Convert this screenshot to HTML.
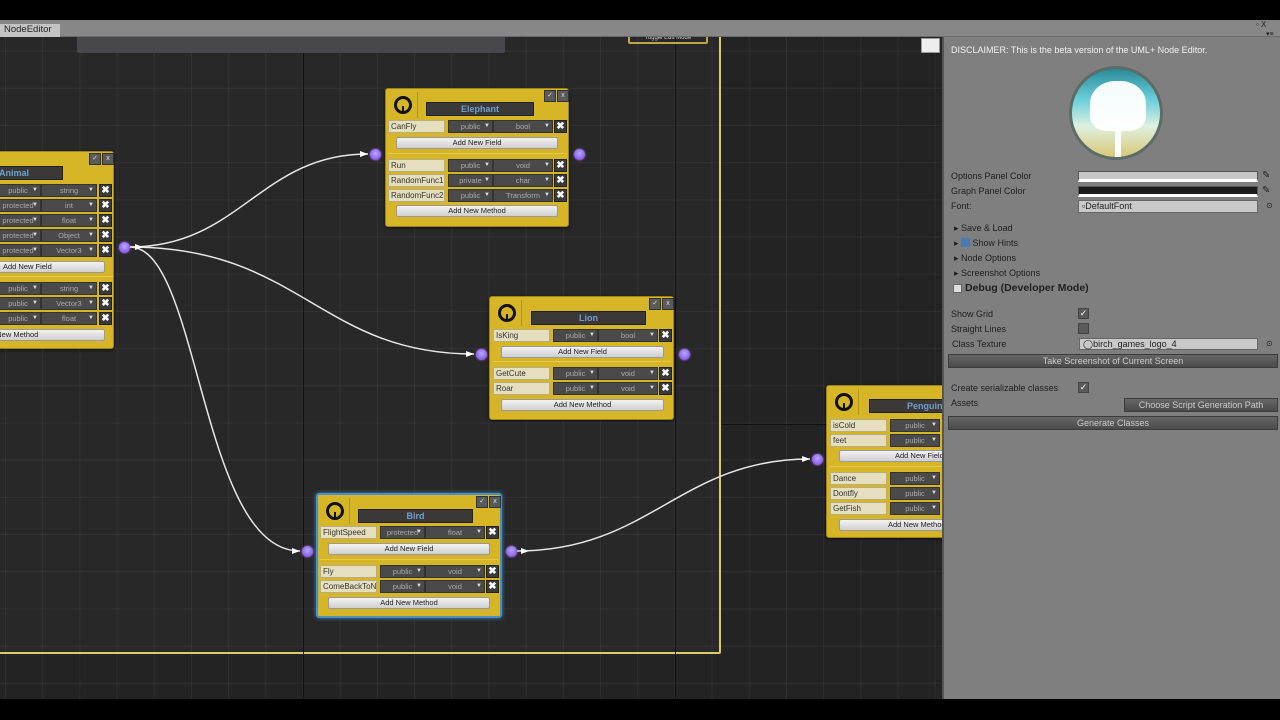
<!DOCTYPE html>
<html><head><meta charset="utf-8"><style>
*{margin:0;padding:0;box-sizing:border-box}
body{width:1280px;height:720px;overflow:hidden;background:#000;font-family:"Liberation Sans",sans-serif;position:relative}
.abs{position:absolute}
#canvas{position:absolute;left:0;top:37px;width:942px;height:662px;background-color:#232323;
background-image:linear-gradient(90deg,rgba(255,255,255,.05) 1px,transparent 1px),linear-gradient(0deg,rgba(255,255,255,.05) 1px,transparent 1px);
background-size:37.2px 37.2px;background-position:5px 14.6px;overflow:hidden}
.node{position:absolute;background:#d6b526;border:1px solid #9c8319;border-radius:3px;box-shadow:0 1px 3px rgba(0,0,0,.6)}
.node *{position:absolute}
.ic{width:18px;height:18px;border:3px solid #111;border-radius:50%;left:8px;top:7px}
.ic:after{content:"";position:absolute;left:5px;top:7px;width:2px;height:6px;background:#111}
.vl{left:31px;top:3px;width:1px;height:26px;background:#b09420}
.tt{height:14px;background:#3a3937;border:1px solid #222;color:#6f9fd0;font-size:9px;font-weight:bold;text-align:center;line-height:12px}
.bt{width:12px;height:12px;top:1px;background:#5a5a5a;border:1px solid #333;color:#ddd;font-size:7px;text-align:center;line-height:10px}
.nm{height:13px;background:#e6dfbf;border:1px solid #b8ad80;font-size:8px;color:#333;line-height:11px;padding-left:2px;white-space:nowrap;overflow:hidden}
.dd{height:13px;background:#4a4a4a;border:1px solid #333;color:#aaa;font-size:7.5px;line-height:11px;text-align:center;white-space:nowrap;overflow:hidden}
.dd:after{content:"▼";position:absolute;right:2px;top:0;font-size:6px;color:#ddd}
.x{width:13px;height:13px;background:#3a3a3a;border:1px solid #222;color:#fff;font-size:10px;font-weight:bold;text-align:center;line-height:11px}
.ab{height:12px;background:linear-gradient(#f2f2f2,#cfcfcf);border:1px solid #999;border-radius:2px;font-size:7.5px;color:#222;text-align:center;line-height:10px;white-space:nowrap;overflow:hidden}
.sep{height:1px;background:#a88c1a;border-bottom:1px solid #e6c94a}
.port{position:absolute;width:11px;height:11px;border-radius:50%;background:radial-gradient(circle at 50% 40%,#b9a8ff,#8a6bf0 60%,#b040d0);box-shadow:0 0 2px #c6f}
#panel{position:absolute;left:942px;top:37px;width:338px;height:662px;background:#7f7f7f;border-left:2px solid #555}
#panel .t{position:absolute;font-size:9px;color:#1e1e1e;white-space:nowrap}
.fld{position:absolute;height:12px;background:#c9c9c9;border:1px solid #666;font-size:9px;color:#222;line-height:10px;padding-left:3px}
.bar{position:absolute;height:14px;background:linear-gradient(#666,#4a4a4a);border:1px solid #3c3c3c;color:#ccc;font-size:9px;text-align:center;line-height:12px}
.cb{position:absolute;width:11px;height:11px;background:#5a5a5a;border:1px solid #444;color:#fff;font-size:9px;line-height:9px;text-align:center}
</style></head><body>
<div class="abs" style="left:0;top:20px;width:1280px;height:17px;background:#878787;border-bottom:1px solid #6a6a6a"></div>
<div class="abs" style="left:0;top:24px;width:60px;height:13px;background:#c4c4c4;font-size:9.5px;color:#222;line-height:12px;padding-left:4px">NodeEditor</div>
<div class="abs" style="left:1256px;top:20px;font-size:8px;color:#222">▫ X</div>
<div class="abs" style="left:1266px;top:30px;font-size:7px;color:#222">▾≡</div>

<div id="canvas">
<div class="abs" style="left:-4px;top:-4px;width:725px;height:621px;border:2px solid #d9cb6a;background:rgba(255,255,255,.025);border-radius:2px"></div>
<div class="abs" style="left:303px;top:0;width:1px;height:662px;background:#111"></div>
<div class="abs" style="left:675px;top:0;width:1px;height:662px;background:#111"></div>
<div class="abs" style="left:721px;top:387px;width:221px;height:1px;background:#111"></div>
<div class="abs" style="left:77px;top:0;width:428px;height:16px;background:#48484c;border-radius:0 0 2px 2px"></div>
<div class="abs" style="left:628px;top:-5px;width:80px;height:12px;border:2px solid #b9a74a;border-radius:2px;font-size:6px;color:#ccc;text-align:center;line-height:8px">Toggle Edit Mode</div>
<div class="abs" style="left:921px;top:1px;width:19px;height:15px;background:#eee;border:1px solid #999"></div>

<svg class="abs" style="left:0;top:-37px" width="942" height="720">
<g fill="none" stroke="#e8e8e8" stroke-width="1.5">
<path d="M130 247 C 240 247, 260 154, 368 154"/>
<path d="M130 247 C 300 247, 320 354, 474 354"/>
<path d="M130 247 C 200 247, 200 551, 300 551"/>
<path d="M517 551 C 650 551, 680 459, 810 459"/>
</g>
<g fill="#fff"><path d="M360 151 l8 3 -8 3z"/><path d="M466 351 l8 3 -8 3z"/><path d="M292 548 l8 3 -8 3z"/><path d="M802 456 l8 3 -8 3z"/><path d="M135 244 l8 3 -8 3z"/><path d="M521 548 l8 3 -8 3z"/></g>
</svg>

<!-- Animal -->
<div class="node" style="left:-76px;top:114px;width:190px;height:198px">
<div class="tt" style="left:40px;top:14px;width:98px">Animal</div>
<div class="bt" style="left:164px">✓</div><div class="bt" style="left:177px">x</div>
<div class="dd" style="left:70px;top:32px;width:46px">public</div><div class="dd" style="left:116px;top:32px;width:56px">string</div><div class="x" style="left:174px;top:32px">✖</div>
<div class="dd" style="left:70px;top:47px;width:46px">protected</div><div class="dd" style="left:116px;top:47px;width:56px">int</div><div class="x" style="left:174px;top:47px">✖</div>
<div class="dd" style="left:70px;top:62px;width:46px">protected</div><div class="dd" style="left:116px;top:62px;width:56px">float</div><div class="x" style="left:174px;top:62px">✖</div>
<div class="dd" style="left:70px;top:77px;width:46px">protected</div><div class="dd" style="left:116px;top:77px;width:56px">Object</div><div class="x" style="left:174px;top:77px">✖</div>
<div class="dd" style="left:70px;top:92px;width:46px">protected</div><div class="dd" style="left:116px;top:92px;width:56px">Vector3</div><div class="x" style="left:174px;top:92px">✖</div>
<div class="ab" style="left:60px;top:109px;width:120px;text-align:left;padding-left:17px">Add New Field</div>
<div class="sep" style="left:0;top:124px;width:188px"></div>
<div class="dd" style="left:70px;top:130px;width:46px">public</div><div class="dd" style="left:116px;top:130px;width:56px">string</div><div class="x" style="left:174px;top:130px">✖</div>
<div class="dd" style="left:70px;top:145px;width:46px">public</div><div class="dd" style="left:116px;top:145px;width:56px">Vector3</div><div class="x" style="left:174px;top:145px">✖</div>
<div class="dd" style="left:70px;top:160px;width:46px">public</div><div class="dd" style="left:116px;top:160px;width:56px">float</div><div class="x" style="left:174px;top:160px">✖</div>
<div class="ab" style="left:60px;top:177px;width:120px;text-align:left;padding-left:4px">d New Method</div>
</div>
<div class="port" style="left:119px;top:205px"></div>

<!-- Elephant -->
<div class="node" style="left:385px;top:51px;width:184px;height:139px">
<div class="ic"></div><div class="vl"></div>
<div class="tt" style="left:40px;top:13px;width:108px">Elephant</div>
<div class="bt" style="left:158px">✓</div><div class="bt" style="left:171px">x</div>
<div class="nm" style="left:2px;top:31px;width:57px">CanFly</div><div class="dd" style="left:62px;top:31px;width:45px">public</div><div class="dd" style="left:107px;top:31px;width:60px">bool</div><div class="x" style="left:168px;top:31px">✖</div>
<div class="ab" style="left:10px;top:48px;width:162px">Add New Field</div>
<div class="sep" style="left:2px;top:64px;width:178px"></div>
<div class="nm" style="left:2px;top:70px;width:57px">Run</div><div class="dd" style="left:62px;top:70px;width:45px">public</div><div class="dd" style="left:107px;top:70px;width:60px">void</div><div class="x" style="left:168px;top:70px">✖</div>
<div class="nm" style="left:2px;top:85px;width:57px">RandomFunc1</div><div class="dd" style="left:62px;top:85px;width:45px">private</div><div class="dd" style="left:107px;top:85px;width:60px">char</div><div class="x" style="left:168px;top:85px">✖</div>
<div class="nm" style="left:2px;top:100px;width:57px">RandomFunc2</div><div class="dd" style="left:62px;top:100px;width:45px">public</div><div class="dd" style="left:107px;top:100px;width:60px">Transform</div><div class="x" style="left:168px;top:100px">✖</div>
<div class="ab" style="left:10px;top:116px;width:162px">Add New Method</div>
</div>
<div class="port" style="left:370px;top:112px"></div><div class="port" style="left:574px;top:112px"></div>

<!-- Lion -->
<div class="node" style="left:489px;top:259px;width:185px;height:124px">
<div class="ic"></div><div class="vl"></div>
<div class="tt" style="left:41px;top:14px;width:115px">Lion</div>
<div class="bt" style="left:159px">✓</div><div class="bt" style="left:172px">x</div>
<div class="nm" style="left:3px;top:32px;width:57px">IsKing</div><div class="dd" style="left:63px;top:32px;width:45px">public</div><div class="dd" style="left:108px;top:32px;width:60px">bool</div><div class="x" style="left:169px;top:32px">✖</div>
<div class="ab" style="left:11px;top:49px;width:163px">Add New Field</div>
<div class="sep" style="left:3px;top:64px;width:178px"></div>
<div class="nm" style="left:3px;top:70px;width:57px">GetCute</div><div class="dd" style="left:63px;top:70px;width:45px">public</div><div class="dd" style="left:108px;top:70px;width:60px">void</div><div class="x" style="left:169px;top:70px">✖</div>
<div class="nm" style="left:3px;top:85px;width:57px">Roar</div><div class="dd" style="left:63px;top:85px;width:45px">public</div><div class="dd" style="left:108px;top:85px;width:60px">void</div><div class="x" style="left:169px;top:85px">✖</div>
<div class="ab" style="left:11px;top:102px;width:163px">Add New Method</div>
</div>
<div class="port" style="left:476px;top:312px"></div><div class="port" style="left:679px;top:312px"></div>

<!-- Bird -->
<div class="node" style="left:316px;top:456px;width:186px;height:125px;border:2px solid #4a90c0;box-shadow:0 0 4px #3a8ad0">
<div class="ic"></div><div class="vl"></div>
<div class="tt" style="left:40px;top:14px;width:115px">Bird</div>
<div class="bt" style="left:158px">✓</div><div class="bt" style="left:171px">x</div>
<div class="nm" style="left:2px;top:31px;width:57px">FlightSpeed</div><div class="dd" style="left:62px;top:31px;width:45px">protected</div><div class="dd" style="left:107px;top:31px;width:60px">float</div><div class="x" style="left:168px;top:31px">✖</div>
<div class="ab" style="left:10px;top:48px;width:162px">Add New Field</div>
<div class="sep" style="left:2px;top:64px;width:178px"></div>
<div class="nm" style="left:2px;top:70px;width:57px">Fly</div><div class="dd" style="left:62px;top:70px;width:45px">public</div><div class="dd" style="left:107px;top:70px;width:60px">void</div><div class="x" style="left:168px;top:70px">✖</div>
<div class="nm" style="left:2px;top:85px;width:57px">ComeBackToN</div><div class="dd" style="left:62px;top:85px;width:45px">public</div><div class="dd" style="left:107px;top:85px;width:60px">void</div><div class="x" style="left:168px;top:85px">✖</div>
<div class="ab" style="left:10px;top:102px;width:162px">Add New Method</div>
</div>
<div class="port" style="left:302px;top:509px"></div><div class="port" style="left:506px;top:509px"></div>

<!-- Penguin -->
<div class="node" style="left:826px;top:348px;width:140px;height:153px">
<div class="ic"></div><div class="vl"></div>
<div class="tt" style="left:42px;top:13px;width:100px;text-align:left;padding-left:37px">Penguin</div>
<div class="nm" style="left:3px;top:33px;width:57px">isCold</div><div class="dd" style="left:63px;top:33px;width:50px">public</div>
<div class="nm" style="left:3px;top:48px;width:57px">feet</div><div class="dd" style="left:63px;top:48px;width:50px">public</div>
<div class="ab" style="left:12px;top:64px;width:120px;text-align:left;padding-left:55px">Add New Field</div>
<div class="sep" style="left:3px;top:80px;width:130px"></div>
<div class="nm" style="left:3px;top:86px;width:57px">Dance</div><div class="dd" style="left:63px;top:86px;width:50px">public</div>
<div class="nm" style="left:3px;top:101px;width:57px">Dontfly</div><div class="dd" style="left:63px;top:101px;width:50px">public</div>
<div class="nm" style="left:3px;top:116px;width:57px">GetFish</div><div class="dd" style="left:63px;top:116px;width:50px">public</div>
<div class="ab" style="left:12px;top:133px;width:120px;text-align:left;padding-left:48px">Add New Method</div>
</div>
<div class="port" style="left:812px;top:417px"></div>
</div>

<div id="panel">
<div class="t" style="left:7px;top:8px;color:#f2f2f2">DISCLAIMER: This is the beta version of the UML+ Node Editor.</div>
<div class="abs" style="left:125px;top:29px;width:94px;height:94px;border-radius:50%;border:3px solid #5c6c66;overflow:hidden;background:linear-gradient(#2a8a98 0,#6ccfdc 35%,#dff0e0 65%,#d8c878 100%)">
<div class="abs" style="left:18px;top:12px;width:56px;height:50px;border-radius:45% 45% 30% 30%;background:#fff;opacity:.95"></div>
<div class="abs" style="left:43px;top:55px;width:6px;height:35px;background:#fff"></div>
</div>
<div class="t" style="left:7px;top:134px">Options Panel Color</div>
<div class="abs" style="left:134px;top:134px;width:180px;height:11px;background:#c8c8c8;border:1px solid #555;border-bottom:3px solid #fff"></div>
<div class="t" style="left:7px;top:149px">Graph Panel Color</div>
<div class="abs" style="left:134px;top:149px;width:180px;height:11px;background:#1c1c1c;border:1px solid #555;border-bottom:3px solid #fff"></div>
<div class="t" style="left:318px;top:133px;font-size:10px">✎</div><div class="t" style="left:318px;top:148px;font-size:10px">✎</div>
<div class="t" style="left:7px;top:164px">Font:</div>
<div class="fld" style="left:134px;top:163px;width:180px;height:13px">▫DefaultFont</div>
<div class="t" style="left:322px;top:164px;font-size:8px">⊙</div>
<div class="t" style="left:10px;top:186px">▸ Save &amp; Load</div>
<div class="t" style="left:10px;top:201px">▸ <span style="display:inline-block;width:9px;height:9px;background:#4a7ab0;vertical-align:-1px"></span> Show Hints</div>
<div class="t" style="left:10px;top:216px">▸ Node Options</div>
<div class="t" style="left:10px;top:231px">▸ Screenshot Options</div>
<div class="abs" style="left:9px;top:247px;width:9px;height:9px;background:#ddd;border:1px solid #666"></div>
<div class="t" style="left:21px;top:245px;font-size:10.5px;font-weight:bold">Debug (Developer Mode)</div>
<div class="t" style="left:7px;top:272px">Show Grid</div><div class="cb" style="left:134px;top:271px">✓</div>
<div class="t" style="left:7px;top:287px">Straight Lines</div><div class="cb" style="left:134px;top:286px"></div>
<div class="t" style="left:8px;top:302px">Class Texture</div>
<div class="fld" style="left:135px;top:301px;width:179px">◯birch_games_logo_4</div>
<div class="t" style="left:322px;top:302px;font-size:8px">⊙</div>
<div class="bar" style="left:4px;top:317px;width:330px">Take Screenshot of Current Screen</div>
<div class="t" style="left:7px;top:346px">Create serializable classes</div><div class="cb" style="left:134px;top:345px">✓</div>
<div class="t" style="left:7px;top:361px">Assets</div>
<div class="bar" style="left:180px;top:361px;width:154px">Choose Script Generation Path</div>
<div class="bar" style="left:4px;top:379px;width:330px">Generate Classes</div>
</div>
</body></html>
